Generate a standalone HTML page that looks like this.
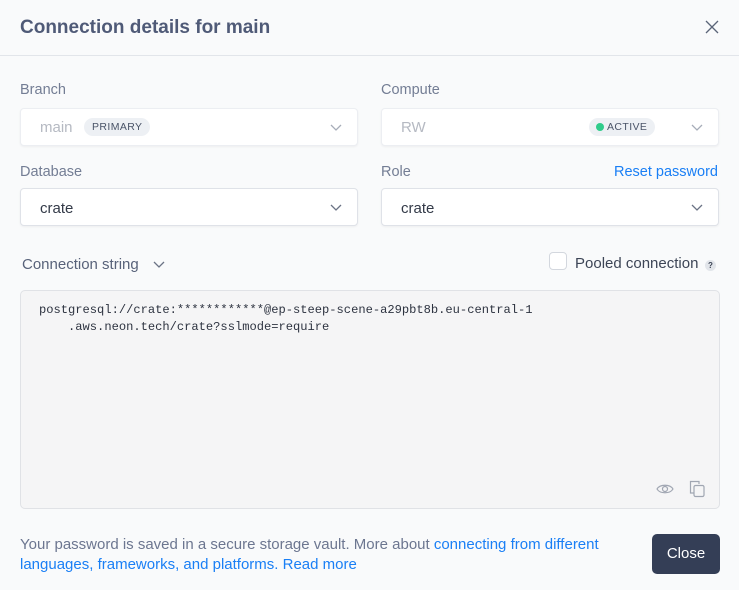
<!DOCTYPE html>
<html><head><style>
*{box-sizing:border-box;margin:0;padding:0}
body{width:739px;height:590px;background:#f9fafb;font-family:"Liberation Sans",sans-serif;position:relative;overflow:hidden;color:#4a5468}
.a{position:absolute}
.lbl{font-size:14.5px;color:#737d94}
.inp{position:absolute;height:38px;background:#fff;border:1px solid #dfe2e8;border-radius:4px;box-shadow:0 1px 2px rgba(0,0,0,.05)}
.inp.dis{border-color:#eceef2}
.chev{position:absolute;right:14px;top:12px}
.badge{position:absolute;top:9px;height:18px;border-radius:9px;background:#edf0f4;font-size:10.5px;color:#4a5468;letter-spacing:.4px;line-height:18px;padding:0 8px}
</style></head><body>
<div class="a" style="left:20px;top:17px;font-size:19px;font-weight:bold;color:#4f5a77">Connection details for main</div>
<svg class="a" style="left:704px;top:19px" width="16" height="16" viewBox="0 0 16 16"><path d="M2 2L14 14M14 2L2 14" stroke="#5b6478" stroke-width="1.3"/></svg>
<div class="a" style="left:0;top:55px;width:739px;height:1px;background:#e2e5ea"></div>

<div class="a lbl" style="left:20px;top:82px">Branch</div>
<div class="a lbl" style="left:381px;top:82px">Compute</div>
<div class="inp dis" style="left:20px;top:108px;width:338px"><span class="a" style="left:19px;top:10px;font-size:15px;color:#b5b9c2">main</span><span class="badge" style="left:63px">PRIMARY</span><svg class="chev" width="14" height="14"><path d="M2 4L7 9L12 4" fill="none" stroke="#a7adb9" stroke-width="1.3"/></svg></div>
<div class="inp dis" style="left:381px;top:108px;width:338px"><span class="a" style="left:19px;top:10px;font-size:15px;color:#b5b9c2">RW</span><span class="badge" style="left:207px;padding-left:18px"><span class="a" style="left:7px;top:5px;width:8px;height:8px;border-radius:50%;background:#2fcc8b"></span>ACTIVE</span><svg class="chev" width="14" height="14"><path d="M2 4L7 9L12 4" fill="none" stroke="#a7adb9" stroke-width="1.3"/></svg></div>

<div class="a lbl" style="left:20px;top:164px">Database</div>
<div class="a lbl" style="left:381px;top:164px">Role</div>
<div class="a" style="left:614px;top:164px;font-size:14.5px;color:#1a7ff5">Reset password</div>
<div class="inp" style="left:20px;top:188px;width:338px"><span class="a" style="left:19px;top:11px;font-size:15px;color:#333a48">crate</span><svg class="chev" width="14" height="14"><path d="M2 4L7 9L12 4" fill="none" stroke="#6b7385" stroke-width="1.3"/></svg></div>
<div class="inp" style="left:381px;top:188px;width:338px"><span class="a" style="left:19px;top:11px;font-size:15px;color:#333a48">crate</span><svg class="chev" width="14" height="14"><path d="M2 4L7 9L12 4" fill="none" stroke="#6b7385" stroke-width="1.3"/></svg></div>

<div class="a" style="left:22px;top:256px;font-size:15px;color:#58627a">Connection string</div>
<svg class="a" style="left:152px;top:258px" width="14" height="14"><path d="M2 4L7 9L12 4" fill="none" stroke="#6b7385" stroke-width="1.3"/></svg>
<div class="a" style="left:549px;top:252px;width:18px;height:18px;border:1px solid #d3d7de;border-radius:4px;background:#fff"></div>
<div class="a" style="left:575px;top:255px;font-size:15px;color:#3d4556">Pooled connection</div>
<div class="a" style="left:705px;top:260px;width:11px;height:11px;border-radius:50%;background:#e2e5ea;font-size:8px;font-weight:bold;text-align:center;line-height:11px;color:#3d4556">?</div>

<div class="a" style="left:20px;top:290px;width:700px;height:219px;background:#f5f5f6;border:1px solid #e0e2e6;border-radius:5px"></div>
<div class="a" style="left:39px;top:302px;font-family:'Liberation Mono',monospace;font-size:12.1px;line-height:17px;color:#2d3340;white-space:pre">postgresql://crate:************@ep-steep-scene-a29pbt8b.eu-central-1
    .aws.neon.tech/crate?sslmode=require</div>
<svg class="a" style="left:656px;top:481px" width="18" height="16" viewBox="0 0 18 16"><path d="M1 8C4 3 14 3 17 8C14 13 4 13 1 8Z" fill="none" stroke="#a0a6b2" stroke-width="1.2"/><circle cx="9" cy="8" r="2.5" fill="none" stroke="#a0a6b2" stroke-width="1.2"/></svg>
<svg class="a" style="left:688px;top:479px" width="18" height="19" viewBox="0 0 18 19"><path d="M6 14H2.5V2.5H11V5" fill="none" stroke="#a0a6b2" stroke-width="1.2"/><rect x="6" y="6.5" width="10" height="11" rx="1.5" fill="none" stroke="#a0a6b2" stroke-width="1.2"/></svg>

<div class="a" style="left:20px;top:535px;width:620px;font-size:15px;line-height:20px;color:#6c7690">Your password is saved in a secure storage vault. More about <span style="color:#1a7ff5">connecting from different<br>languages, frameworks, and platforms. Read more</span></div>
<div class="a" style="left:652px;top:534px;width:68px;height:40px;background:#343e56;border-radius:5px;color:#fff;font-size:15px;text-align:center;line-height:40px">Close</div>
</body></html>
